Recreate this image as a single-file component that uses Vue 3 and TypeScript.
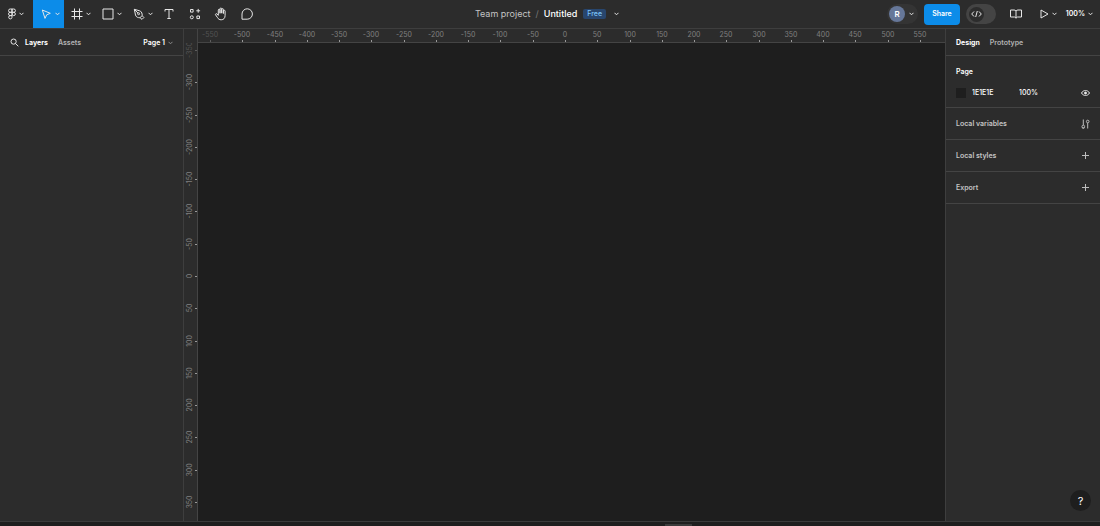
<script setup lang="ts">
import { computed, ref } from 'vue'

type ToolId = 'move' | 'frame' | 'shape' | 'pen' | 'text' | 'resources' | 'hand' | 'comment'

interface Tool {
  id: ToolId
  label: string
  menu: boolean
}

const tools: Tool[] = [
  { id: 'move', label: 'Move', menu: true },
  { id: 'frame', label: 'Frame', menu: true },
  { id: 'shape', label: 'Rectangle', menu: true },
  { id: 'pen', label: 'Pen', menu: true },
  { id: 'text', label: 'Text', menu: false },
  { id: 'resources', label: 'Resources', menu: false },
  { id: 'hand', label: 'Hand', menu: false },
  { id: 'comment', label: 'Comment', menu: false },
]

const activeTool = ref<ToolId>('move')
const leftTab = ref('Layers')
const rightTab = ref('Design')
const devMode = ref(false)
const pageColor = ref('1E1E1E')
const pageOpacity = ref('100%')

const scale = 0.6455
const originX = 367
const originY = 233

interface Mark {
  value: number
  at: number
  dim: boolean
}

function marks(from: number, to: number, origin: number): Mark[] {
  const list: Mark[] = []
  for (let v = from; v <= to; v += 50) {
    list.push({ value: v, at: Math.round(origin + v * scale), dim: v === from })
  }
  return list
}

const columns = computed(() => marks(-550, 550, originX))
const rows = computed(() => marks(-350, 350, originY))
</script>

<template>
  <div class="app">
    <header class="toolbar">
      <nav class="tools" aria-label="Tools">
        <button class="tool main-menu" aria-label="Main menu">
          <svg class="icon" width="10" height="12" viewBox="0 0 10 12">
            <path d="M5 1H3.2a1.65 1.65 0 0 0 0 3.3H5zM5 1h1.8a1.65 1.65 0 0 1 0 3.3H5zM5 4.3H3.2a1.65 1.65 0 0 0 0 3.3H5zM5 7.6H3.2A1.65 1.65 0 1 0 5 9.3z" />
            <circle cx="6.7" cy="5.95" r="1.65" />
          </svg>
          <svg class="chevron" width="5" height="4" viewBox="0 0 5 4"><path d="M.5.8l2 2 2-2" /></svg>
        </button>
        <button
          v-for="tool in tools"
          :key="tool.id"
          class="tool"
          :class="{ 'with-menu': tool.menu, active: activeTool === tool.id }"
          :aria-label="tool.label"
          @click="activeTool = tool.id"
        >
          <svg v-if="tool.id === 'move'" class="icon" width="12" height="14" viewBox="0 0 12 14">
            <path d="M2.3 3l8 3.3-3.6 1.5L5 11.4z" />
          </svg>
          <svg v-else-if="tool.id === 'frame'" class="icon" width="12" height="14" viewBox="0 0 12 14">
            <path d="M3.5 1.5v11M8.5 1.5v11M.5 4.5h11M.5 9.5h11" />
          </svg>
          <svg v-else-if="tool.id === 'shape'" class="icon" width="12" height="14" viewBox="0 0 12 14">
            <path d="M1 2h10v10H1z" />
          </svg>
          <svg v-else-if="tool.id === 'pen'" class="icon" width="12" height="14" viewBox="0 0 12 14">
            <path d="M1.3 2.3l5.3 1.5c1.4.4 2.3 1.8 2.5 3.3l.2 1.3-2.4 2.4-1.4-.2C4 10.4 2.9 9.4 2.5 8zM1.5 2.5l3.6 3.7M9 8.6l1.9 1.9-1.9 1.9L7 10.6" />
            <circle cx="5.6" cy="6.7" r="1" />
          </svg>
          <svg v-else-if="tool.id === 'text'" class="icon" width="12" height="14" viewBox="0 0 12 14">
            <path d="M2 4.5V2.500h8v2M6 2.500v9M4.300 11.500h3.400" />
          </svg>
          <svg v-else-if="tool.id === 'resources'" class="icon" width="12" height="14" viewBox="0 0 12 14">
            <path d="M1.500 2.500h2.600v2.600H1.500zM7.900 9h2.600v2.600H7.900zM9.200 1.900v3.800M7.300 3.800h3.800" />
            <circle cx="2.800" cy="10.300" r="1.500" />
          </svg>
          <svg v-else-if="tool.id === 'hand'" class="icon" width="14" height="14" viewBox="0 0 14 14">
            <path d="M4.300 8.300V3.100a.85.85 0 0 1 1.700 0V6.500M6 6V1.900a.85.85 0 0 1 1.700 0V6.300M7.700 6V2.500a.85.85 0 0 1 1.700 0V6.600M9.400 6.500V4.100a.85.85 0 0 1 1.700 0v4.400c0 2.600-1.500 4.300-3.900 4.300-1.900 0-2.900-.8-3.700-2.200L1.600 7.900c-.5-1 .8-1.700 1.500-.9l1.200 1.400" />
          </svg>
          <svg v-else class="icon" width="14" height="14" viewBox="0 0 14 14">
            <path d="M2 12.200V7a5.200 5.200 0 1 1 5.200 5.200z" />
          </svg>
          <svg v-if="tool.menu" class="chevron" width="5" height="4" viewBox="0 0 5 4"><path d="M.5.8l2 2 2-2" /></svg>
        </button>
      </nav>

      <div class="title">
        <a class="project" href="#">Team project</a>
        <span class="slash">/</span>
        <span class="file">Untitled</span>
        <span class="plan">Free</span>
        <button class="plain" aria-label="File menu">
          <svg class="chevron" width="5" height="4" viewBox="0 0 5 4"><path d="M.5.8l2 2 2-2" /></svg>
        </button>
      </div>

      <div class="actions">
        <button class="account" aria-label="Account">
          <span class="avatar">R</span>
          <svg class="chevron" width="5" height="4" viewBox="0 0 5 4"><path d="M.5.8l2 2 2-2" /></svg>
        </button>
        <button class="share">Share</button>
        <label class="switch">
          <input v-model="devMode" type="checkbox" aria-label="Dev mode" />
          <span class="knob">
            <svg class="icon" width="11" height="8" viewBox="0 0 11 8"><path d="M3 1.500L.7 4 3 6.500M8 1.500L10.300 4 8 6.500M6.300 1L4.700 7" /></svg>
          </span>
        </label>
        <button class="plain library" aria-label="Libraries">
          <svg class="icon" width="12" height="10" viewBox="0 0 12 10">
            <path d="M6 2C5.500 1.200 4.700 1 4 1H.5v7H4.500C5.300 8 6 8.500 6 9.300 6 8.500 6.700 8 7.500 8h4V1H8c-.7 0-1.500.2-2 1zM6 2v7" />
          </svg>
        </button>
        <button class="plain play" aria-label="Present">
          <svg class="icon" width="9" height="10" viewBox="0 0 9 10"><path d="M1 1l7 4-7 4z" /></svg>
          <svg class="chevron" width="5" height="4" viewBox="0 0 5 4"><path d="M.5.8l2 2 2-2" /></svg>
        </button>
        <button class="plain zoom">
          100%
          <svg class="chevron" width="5" height="4" viewBox="0 0 5 4"><path d="M.5.8l2 2 2-2" /></svg>
        </button>
      </div>
    </header>

    <main class="workspace">
      <aside class="left">
        <div class="left-head">
          <button class="plain search" aria-label="Search">
            <svg class="icon" width="9" height="9" viewBox="0 0 9 9"><circle cx="3.600" cy="3.600" r="2.600" /><path d="M5.500 5.500L8.300 8.300" /></svg>
          </button>
          <button
            v-for="tab in ['Layers', 'Assets']"
            :key="tab"
            class="tab"
            :class="{ on: leftTab === tab }"
            @click="leftTab = tab"
          >{{ tab }}</button>
          <button class="plain page">
            Page 1
            <svg class="chevron faint" width="5" height="4" viewBox="0 0 5 4"><path d="M.5.8l2 2 2-2" /></svg>
          </button>
        </div>
      </aside>

      <section class="stage" aria-label="Canvas">
        <div class="corner"></div>
        <svg class="ruler ruler-x">
          <g v-for="m in columns" :key="m.value" :class="{ dim: m.dim }">
            <text :x="m.at" y="8" text-anchor="middle">{{ m.value }}</text>
            <rect :x="m.at" y="11" width="1" height="2" />
          </g>
        </svg>
        <svg class="ruler ruler-y">
          <g v-for="m in rows" :key="m.value" :class="{ dim: m.dim }">
            <text :transform="`translate(8 ${m.at}) rotate(-90)`" text-anchor="middle">{{ m.value }}</text>
            <rect x="11" :y="m.at" width="2" height="1" />
          </g>
        </svg>
        <div class="canvas"></div>
      </section>

      <aside class="right">
        <div class="right-head">
          <button
            v-for="tab in ['Design', 'Prototype']"
            :key="tab"
            class="tab"
            :class="{ on: rightTab === tab }"
            @click="rightTab = tab"
          >{{ tab }}</button>
        </div>
        <section class="page-panel">
          <h2>Page</h2>
          <div class="fill">
            <span class="swatch"></span>
            <input v-model="pageColor" class="hex" aria-label="Page colour" />
            <input v-model="pageOpacity" class="opacity" aria-label="Page opacity" />
            <button class="plain" aria-label="Toggle visibility">
              <svg class="icon" width="9" height="8" viewBox="0 0 9 8"><path d="M.5 4C2.200.7 6.800.7 8.500 4 6.800 7.300 2.200 7.300.5 4z" /><circle class="solid" cx="4.500" cy="4" r="1" /></svg>
            </button>
          </div>
        </section>
        <section class="row">
          <h3>Local variables</h3>
          <button class="plain" aria-label="Open variables">
            <svg class="icon soft" width="9" height="10" viewBox="0 0 9 10"><path d="M2.300.5v5.500M.8 8.500l1.500 1 1.500-1M6.700 4v5.500" /><circle cx="2.300" cy="7.500" r="1.300" /><circle cx="6.700" cy="2.500" r="1.300" /></svg>
          </button>
        </section>
        <section v-for="name in ['Local styles', 'Export']" :key="name" class="row">
          <h3>{{ name }}</h3>
          <button class="plain" :aria-label="`Add ${name}`">
            <svg class="icon soft" width="9" height="9" viewBox="0 0 9 9"><path d="M4.500 1v7M1 4.500h7" /></svg>
          </button>
        </section>
      </aside>

      <button class="help" aria-label="Help">?</button>
    </main>

    <footer class="dock"><span class="handle"></span></footer>
  </div>
</template>

<style>
html,
body {
  background: #1e1e1e;
}
</style>

<style scoped>
.app {
  display: flex;
  flex-direction: column;
  min-height: 100vh;
  background: #2c2c2c;
  color: #fff;
  font: 600 7px/10px Inter, "Liberation Sans", sans-serif;
}
button,
input {
  margin: 0;
  padding: 0;
  border: 0;
  background: none;
  color: inherit;
  font: inherit;
}
svg {
  display: block;
  flex: none;
}
.icon,
.chevron {
  fill: none;
  stroke: #e6e6e6;
  stroke-width: 1;
}
.soft {
  stroke: #bdbdbd;
}
.faint {
  stroke: #8c8c8c;
}
.solid {
  fill: #fff;
}
.plain {
  display: flex;
  align-items: center;
}
.toolbar {
  display: grid;
  grid-template-columns: 1fr auto 1fr;
  align-items: center;
  height: 28px;
  border-bottom: 1px solid #3e3e3e;
}
.tools {
  display: flex;
  height: 28px;
}
.tool {
  display: flex;
  align-items: center;
  justify-content: center;
  box-sizing: border-box;
  width: 26px;
  padding-right: 2px;
}
.tool.with-menu {
  gap: 3px;
  width: 31px;
  padding: 0 0 0 2px;
}
.tool.main-menu {
  gap: 2px;
  width: 33px;
}
.tool.active {
  background: #0c8ce9;
}
.title {
  display: flex;
  align-items: center;
  padding-right: 6px;
  font-size: 9px;
  line-height: 12px;
  font-weight: 400;
}
.project {
  color: #c4c4c4;
  text-decoration: none;
}
.slash {
  margin: 0 5px;
  color: #777;
}
.file {
  font-weight: 500;
}
.plan {
  margin: 0 8px 0 6px;
  padding: 0 4px;
  border-radius: 2px;
  background: #28466e;
  color: #7cc4f8;
  font-size: 7px;
  line-height: 10px;
  font-weight: 500;
}
.actions {
  display: flex;
  align-items: center;
  justify-content: flex-end;
  padding-right: 7px;
}
.account {
  display: flex;
  align-items: center;
  gap: 4px;
  height: 20px;
  padding: 0 4px 0 2px;
  border-radius: 10px;
  background: #343434;
}
.avatar {
  width: 16px;
  border-radius: 50%;
  background: #667799;
  font-size: 8px;
  line-height: 16px;
}
.share {
  height: 21px;
  margin-left: 6px;
  padding: 0 8px;
  border-radius: 4px;
  background: #0c8ce9;
}
.switch {
  display: flex;
  align-items: center;
  width: 27px;
  height: 20px;
  margin-left: 6px;
  padding-left: 3px;
  border-radius: 10px;
  background: #444;
}
.switch input {
  position: absolute;
  opacity: 0;
}
.knob {
  display: flex;
  align-items: center;
  justify-content: center;
  width: 15px;
  height: 15px;
  border-radius: 50%;
  background: #2c2c2c;
}
.library {
  margin-left: 14px;
}
.play {
  gap: 3px;
  margin-left: 18px;
}
.zoom {
  gap: 3px;
  margin-left: 9px;
}
.workspace {
  position: relative;
  display: grid;
  grid-template-columns: 184px 1fr 155px;
  flex: 1;
}
.left {
  border-right: 1px solid #3e3e3e;
}
.left-head,
.right-head {
  display: flex;
  align-items: center;
  gap: 10px;
  box-sizing: border-box;
  height: 27px;
  padding: 1px 10px 0;
  border-bottom: 1px solid #444;
}
.search {
  margin-right: -4px;
}
.tab {
  color: #b3b3b3;
}
.tab.on {
  color: #fff;
  font-weight: 700;
}
.page {
  gap: 3px;
  margin-left: auto;
}
.stage {
  display: grid;
  grid-template: 14px 1fr / 14px 1fr;
}
.corner,
.ruler {
  box-sizing: border-box;
}
.corner {
  border-right: 1px solid #444;
}
.ruler {
  width: 100%;
  height: 100%;
  overflow: hidden;
  fill: #808080;
  font-size: 7px;
  font-weight: 400;
}
.ruler rect {
  fill: #999;
}
.ruler-x {
  border-bottom: 1px solid #444;
}
.ruler-y {
  height: 0;
  min-height: 100%;
  border-right: 1px solid #444;
}
.dim {
  opacity: 0.45;
}
.canvas {
  background: #1e1e1e;
}
.right {
  border-left: 1px solid #3e3e3e;
}
h2,
h3 {
  margin: 0;
  font: inherit;
}
.page-panel {
  padding: 11px 10px 9px;
  border-bottom: 1px solid #444;
}
.fill {
  display: flex;
  align-items: center;
  margin-top: 11px;
}
.swatch {
  width: 10px;
  height: 10px;
  background: #1e1e1e;
}
.hex {
  width: 40px;
  margin: 0 7px 0 6px;
  font-weight: 500;
}
.opacity {
  width: 36px;
  margin-right: auto;
  font-weight: 500;
}
.row {
  display: flex;
  align-items: center;
  justify-content: space-between;
  height: 31px;
  padding: 0 10px;
  border-bottom: 1px solid #444;
}
.row h3 {
  color: #c4c4c4;
}
.help {
  position: absolute;
  right: 9px;
  bottom: 10px;
  width: 21px;
  height: 21px;
  border-radius: 50%;
  background: #1e1e1e;
  font-size: 11px;
  font-weight: 400;
}
.dock {
  display: flex;
  justify-content: center;
  align-items: flex-end;
  height: 4px;
  padding-left: 256px;
  border-top: 1px solid #3a3a3a;
  background: #1e1e1e;
}
.handle {
  width: 27px;
  height: 2px;
  background: #3a3a3a;
}
</style>
